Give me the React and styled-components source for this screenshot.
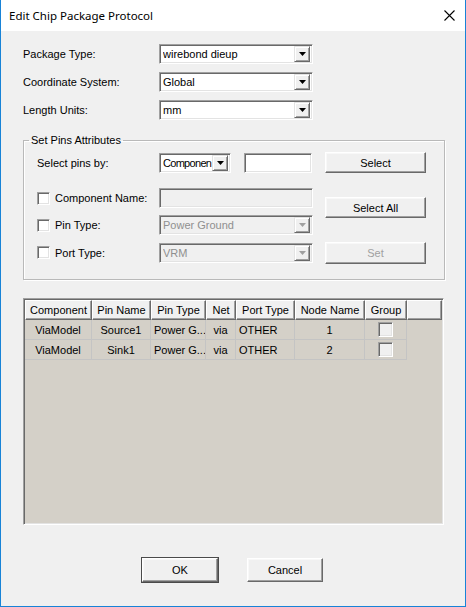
import React from 'react'
import styled, { createGlobalStyle } from 'styled-components'

const Global = createGlobalStyle`
  html, body {
    margin: 0;
    padding: 0;
    background: #ffffff;
  }
  * { box-sizing: border-box; }
`

const UI_FONT = `"Liberation Sans", Arial, sans-serif`

const Window = styled.div`
  width: 466px;
  height: 607px;
  border: 1px solid #1883d7;
  border-top: 0;
  background: #f0f0f0;
  display: flex;
  flex-direction: column;
  font-family: ${UI_FONT};
  font-size: 11px;
  color: #000;
`

const TitleBar = styled.div`
  height: 31px;
  flex: none;
  background: #fff;
  display: flex;
  align-items: center;
  justify-content: space-between;
  padding: 0 10px 0 8px;
`

const Title = styled.span`
  font-family: "Segoe UI", "Noto Sans", sans-serif;
  font-size: 11.5px;
  color: #000;
`

const Body = styled.div`
  flex: 1;
  padding: 13px 20px 0 22px;
  display: flex;
  flex-direction: column;
`

const FormGrid = styled.div`
  display: grid;
  grid-template-columns: 136px 154px;
  grid-auto-rows: 20px;
  row-gap: 8px;
  align-items: center;
`

const Label = styled.span`
  white-space: nowrap;
  width: ${p => (p.$w ? `${p.$w}px` : 'auto')};
  flex: none;
`

const Sunken = styled.div`
  height: ${p => p.$h || 20}px;
  width: ${p => p.$w || 154}px;
  border: 1px solid;
  border-color: #a0a0a0 #ffffff #ffffff #a0a0a0;
  box-shadow: inset 1px 1px 0 #696969, inset -1px -1px 0 #e3e3e3;
  background: ${p => (p.$disabled ? '#f0f0f0' : '#ffffff')};
  color: ${p => (p.$disabled ? '#8f8f8f' : '#000')};
  display: flex;
  align-items: center;
  padding: 0 2px 0 3px;
  white-space: nowrap;
  overflow: hidden;
`

const ComboText = styled.span`
  flex: 1;
  overflow: hidden;
  letter-spacing: ${p => (p.$tight ? '-0.7px' : 'normal')};
`

const ArrowBtn = styled.span`
  width: 16px;
  height: 16px;
  flex: none;
  background: #f0f0f0;
  border: 1px solid;
  border-color: #e3e3e3 #696969 #696969 #e3e3e3;
  box-shadow: inset 1px 1px 0 #ffffff, inset -1px -1px 0 #a0a0a0;
  display: flex;
  align-items: center;
  justify-content: center;
`

const Arrow = ({ disabled }) => (
  <svg width="7" height="4" viewBox="0 0 7 4">
    <polygon points="0,0 7,0 3.5,4" fill={disabled ? '#a0a0a0' : '#000'} />
  </svg>
)

const Combo = ({ value, w, disabled, tight }) => (
  <Sunken $w={w} $disabled={disabled}>
    <ComboText $tight={tight}>{value}</ComboText>
    <ArrowBtn>
      <Arrow disabled={disabled} />
    </ArrowBtn>
  </Sunken>
)

const Button = styled.button`
  width: ${p => p.$w || 101}px;
  height: ${p => p.$h || 21}px;
  font-family: ${UI_FONT};
  font-size: 11px;
  color: ${p => (p.disabled ? '#a0a0a0' : '#000')};
  background: #f0f0f0;
  border: 1px solid;
  border-color: #ffffff #696969 #696969 #ffffff;
  box-shadow: inset -1px -1px 0 #a0a0a0, inset 1px 1px 0 #f8f8f8;
  padding: 0;
  outline: ${p => (p.$default ? '1px solid #4a4a4a' : 'none')};
  outline-offset: 0;
`

const GroupBox = styled.fieldset`
  margin: 14px 0 0 0;
  padding: 6px 14px 16px 13px;
  border: 1px solid #b9b9b9;
  box-shadow: 1px 1px 0 #ffffff, inset 1px 1px 0 #ffffff;
  min-width: 0;
`

const Legend = styled.legend`
  margin-left: -8px;
  padding: 0 2px;
  line-height: 12px;
  font-size: 11px;
`

const TopRow = styled.div`
  display: flex;
  align-items: center;
  height: 21px;
`

const FieldPair = styled.div`
  display: flex;
  gap: 13px;
  width: 166px;
`

const OptionGrid = styled.div`
  display: grid;
  margin-top: 15px;
  grid-template-columns: 122px 154px 12px 101px;
  grid-template-rows: 20px 20px 21px;
  row-gap: 7px;
  align-items: center;

  & > label { grid-column: 1; }
  & > div { grid-column: 2; }
`

const CheckLabel = styled.label`
  display: flex;
  align-items: center;
  gap: 5px;
  white-space: nowrap;
  grid-row: ${p => p.$row};
`

const CheckBox = styled.span`
  width: ${p => p.$size || 13}px;
  height: ${p => p.$size || 13}px;
  flex: none;
  border: 1px solid;
  border-color: #a0a0a0 #ffffff #ffffff #a0a0a0;
  box-shadow: inset 1px 1px 0 #696969, inset -1px -1px 0 #e3e3e3;
  background: ${p => p.$bg || '#ffffff'};
`

const SideButton = styled(Button)`
  grid-column: 4;
  grid-row: ${p => p.$row};
  align-self: ${p => p.$align || 'center'};
  margin-top: ${p => p.$mt || 0}px;
`

const Table = styled.div`
  margin-top: 18px;
  width: 421px;
  height: 227px;
  border: 1px solid;
  border-color: #a0a0a0 #ffffff #ffffff #a0a0a0;
  box-shadow: inset 1px 1px 0 #696969, inset -1px -1px 0 #e3e3e3;
  background: #d4d0c8;
  padding: 1px;
  display: grid;
  grid-template-columns: 67px 59px 55px 30px 59px 70px 42px 1fr;
  grid-auto-rows: 20px;
  align-content: start;
`

const HeadCell = styled.div`
  background: #f0f0f0;
  border: 1px solid;
  border-color: #ffffff #696969 #696969 #ffffff;
  box-shadow: inset -1px -1px 0 #a0a0a0;
  display: flex;
  align-items: center;
  justify-content: center;
  white-space: nowrap;
  overflow: hidden;
`

const Cell = styled.div`
  border-right: 1px solid #c4c4c4;
  border-bottom: 1px solid #c4c4c4;
  display: flex;
  align-items: center;
  justify-content: ${p => (p.$left ? 'flex-start' : 'center')};
  padding-left: ${p => (p.$left ? 3 : 0)}px;
  white-space: nowrap;
  overflow: hidden;
`

const Empty = styled.div``

const Footer = styled.div`
  display: flex;
  justify-content: center;
  gap: 29px;
  margin-top: 33px;
  padding-right: 3px;
`

const columns = ['Component', 'Pin Name', 'Pin Type', 'Net', 'Port Type', 'Node Name', 'Group']

const rows = [
  { comp: 'ViaModel', pin: 'Source1', type: 'Power G...', net: 'via', port: 'OTHER', node: '1' },
  { comp: 'ViaModel', pin: 'Sink1', type: 'Power G...', net: 'via', port: 'OTHER', node: '2' },
]

const CloseIcon = () => (
  <svg width="11" height="11" viewBox="0 0 11 11">
    <path d="M0.5 0.5 L10.5 10.5 M10.5 0.5 L0.5 10.5" stroke="#000" strokeWidth="1.1" />
  </svg>
)

export default function App() {
  return (
    <>
      <Global />
      <Window>
        <TitleBar>
          <Title>Edit Chip Package Protocol</Title>
          <CloseIcon />
        </TitleBar>
        <Body>
          <FormGrid>
            <Label>Package Type:</Label>
            <Combo value="wirebond dieup" />
            <Label>Coordinate System:</Label>
            <Combo value="Global" />
            <Label>Length Units:</Label>
            <Combo value="mm" />
          </FormGrid>

          <GroupBox>
            <Legend>Set Pins Attributes</Legend>
            <TopRow>
              <Label $w={122}>Select pins by:</Label>
              <FieldPair>
                <Combo value="Componen" w={72} tight />
                <Sunken $w={68} />
              </FieldPair>
              <Button>Select</Button>
            </TopRow>
            <OptionGrid>
              <CheckLabel $row={1}>
                <CheckBox />
                Component Name:
              </CheckLabel>
              <Sunken $disabled style={{ gridRow: 1 }} />
              <SideButton $row="1 / span 2" $align="start" $mt={9}>Select All</SideButton>

              <CheckLabel $row={2}>
                <CheckBox />
                Pin Type:
              </CheckLabel>
              <Combo value="Power Ground" disabled />

              <CheckLabel $row={3}>
                <CheckBox />
                Port Type:
              </CheckLabel>
              <Combo value="VRM" disabled />
              <SideButton $row="3" $h={22} disabled>Set</SideButton>
            </OptionGrid>
          </GroupBox>

          <Table>
            {columns.map(c => (
              <HeadCell key={c}>{c}</HeadCell>
            ))}
            <HeadCell />
            {rows.map(r => (
              <React.Fragment key={r.pin}>
                <Cell>{r.comp}</Cell>
                <Cell>{r.pin}</Cell>
                <Cell $left>{r.type}</Cell>
                <Cell>{r.net}</Cell>
                <Cell $left>{r.port}</Cell>
                <Cell>{r.node}</Cell>
                <Cell>
                  <CheckBox $size={15} $bg="#f0f0f0" />
                </Cell>
                <Empty />
              </React.Fragment>
            ))}
          </Table>

          <Footer>
            <Button $w={76} $h={24} $default>OK</Button>
            <Button $w={76} $h={24}>Cancel</Button>
          </Footer>
        </Body>
      </Window>
    </>
  )
}
